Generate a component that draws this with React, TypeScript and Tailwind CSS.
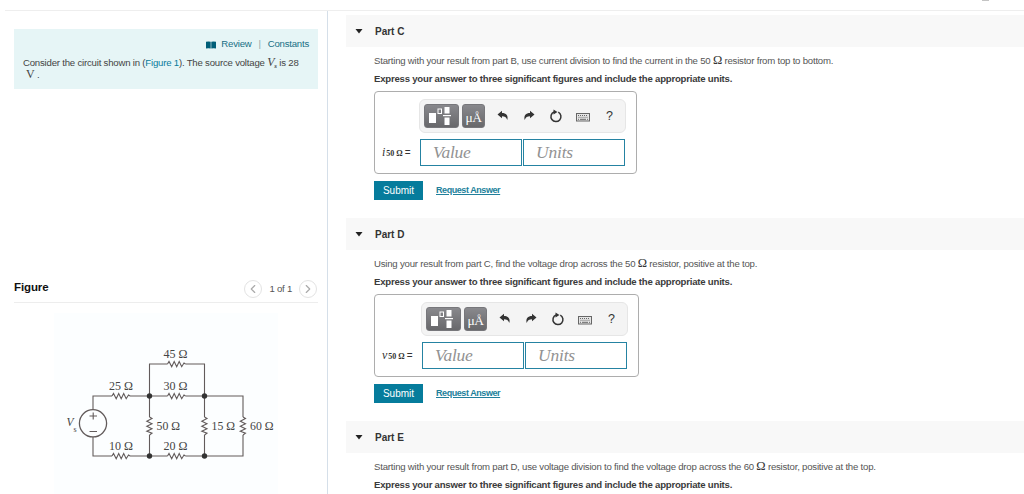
import type { ReactNode } from "react";
import { ChevronLeft, ChevronRight } from "lucide-react";

interface AnswerBoxProps {
  variable: string;
  wide?: boolean;
}

interface PartProps {
  name: string;
  children: ReactNode;
  answer?: ReactNode;
}

const resistorsAcross = [
  { x: 112, y: 396, label: "25 Ω", lx: 109 },
  { x: 167.5, y: 364, label: "45 Ω", lx: 163.5 },
  { x: 167.5, y: 396, label: "30 Ω", lx: 163.5 },
  { x: 112, y: 456, label: "10 Ω", lx: 109 },
  { x: 167.5, y: 456, label: "20 Ω", lx: 163.5 },
];

const resistorsDown = [
  { x: 149.5, label: "50 Ω", lx: 156.5 },
  { x: 204.5, label: "15 Ω", lx: 211.5 },
  { x: 243, label: "60 Ω", lx: 250 },
];

const nodes = [
  [149.5, 396],
  [204.5, 396],
  [149.5, 456],
  [204.5, 456],
];

function Circuit() {
  return (
    <svg viewBox="54 313 224 181" className="ml-10 mt-2.5 h-[181px] w-56 shrink-0 bg-[#fcfeff]">
      <g fill="none" stroke="#625b5b" strokeWidth="1.1">
        <path d="M93 409.500V396H112M130 396H167.500M185.500 396H243V417M243 435V456H185.500M167.500 456H130M112 456H93V437" />
        <path d="M149.500 396V364H167.500M185.500 364H204.500V417M204.500 435V456M149.500 396V417M149.500 435V456" />
        <circle cx="93" cy="423.300" r="13.600" strokeWidth="1.300" />
        <path d="M89.500 416H97M93.200 412.500V419.500M89.500 431.500H97" />
        {resistorsAcross.map((r) => (
          <path
            key={r.label}
            transform={`translate(${r.x} ${r.y})`}
            d="M0 0L1.500 -2.500L4.200 2.700L6.700 -2.500L9.200 2.700L11.700 -2.500L14.200 2.700L16.500 -1L18 0"
          />
        ))}
        {resistorsDown.map((r) => (
          <path
            key={r.label}
            transform={`translate(${r.x} 417)`}
            d="M0 0L2.500 1.500L-2.700 4.200L2.500 6.700L-2.700 9.200L2.500 11.700L-2.700 14.200L2.500 16.200L0 18"
          />
        ))}
      </g>
      {nodes.map(([x, y]) => (
        <circle key={`${x}-${y}`} cx={x} cy={y} r="2.700" fill="#333" />
      ))}
      <g fill="#444" fontFamily="Liberation Serif, serif" fontSize="11.500">
        {resistorsAcross.map((r) => (
          <text key={r.label} x={r.lx} y={r.y - 6} textLength="24" lengthAdjust="spacingAndGlyphs">{r.label}</text>
        ))}
        {resistorsDown.map((r) => (
          <text key={r.label} x={r.lx} y="430" textLength="23.500" lengthAdjust="spacingAndGlyphs">{r.label}</text>
        ))}
        <text x="66.500" y="426" fontStyle="italic">V</text>
        <text x="73.500" y="431.500" fontSize="8">s</text>
      </g>
    </svg>
  );
}

function Omega() {
  return <span className="font-['Liberation_Serif',serif] text-[12.500px] leading-none text-[#333]">Ω</span>;
}

function Toolbar() {
  return (
    <div className="flex h-[34px] w-[207px] items-center rounded-md border border-[#e6e6e6] bg-[#f4f4f4] pl-1">
      <button className="h-6 w-[35px] rounded-[3px] border border-[#77777b] bg-linear-to-b from-[#89898d] to-[#68686b]" aria-label="Templates">
        <svg viewBox="0 0 33 22" className="h-[22px] w-[33px]" fill="white">
          <rect x="4" y="8" width="7" height="10" />
          <rect x="13" y="4" width="3.500" height="4.500" fill="none" stroke="white" />
          <rect x="19.500" y="2" width="5" height="6.500" />
          <rect x="18" y="10" width="8" height="1.200" />
          <rect x="19.500" y="12.500" width="5" height="7.500" />
        </svg>
      </button>
      <button className="ml-[3px] h-6 w-[23px] rounded-[3px] border border-[#77777b] bg-linear-to-b from-[#89898d] to-[#68686b] pt-[3px] font-['Liberation_Serif',serif] text-[13.500px] leading-4 tracking-[-0.4px] text-white">
        μÅ
      </button>
      <svg viewBox="0 0 12 12" className="ml-3 size-3" fill="#333">
        <path d="M0.500 4.500L5 0.800V3C9 3 11.500 5.500 10.300 10C9.300 7 7.800 6.200 5 6.200V8.300Z" />
      </svg>
      <svg viewBox="0 0 12 12" className="ml-3.5 size-3" fill="#333">
        <path d="M11.500 4.500L7 0.800V3C3 3 0.500 5.500 1.700 10C2.700 7 4.200 6.200 7 6.200V8.300Z" />
      </svg>
      <svg viewBox="0 0 14 14" className="ml-3.5 mb-px size-3.5" fill="none" stroke="#333" strokeWidth="1.500">
        <path d="M9.300 3.200A5 5 0 1 1 5 3" />
        <path d="M4.500 0.500V5.500L8.500 3Z" fill="#333" stroke="none" />
      </svg>
      <svg viewBox="0 0 14 9" className="ml-[13px] mt-0.5 h-[9px] w-3.5" fill="none" stroke="#666">
        <rect x="0.500" y="0.500" width="13" height="7.500" fill="#e5e5e5" />
        <path d="M2 2.500H12M2.500 4.300H12" strokeDasharray="1 1" />
        <path d="M2 6.300H3M4 6.300H10M11 6.300H12" />
      </svg>
      <span className="ml-4 text-[12.500px] leading-4 text-[#333]">?</span>
    </div>
  );
}

function AnswerBox({ variable, wide }: AnswerBoxProps) {
  return (
    <div className={`mt-1 h-[83px] rounded border border-[#adadad] pt-[7px] ${wide ? "w-[265px]" : "w-[263px]"}`}>
      <div className={wide ? "ml-[46px]" : "ml-11"}>
        <Toolbar />
      </div>
      <div className="mt-1.5 flex h-[27px] items-center">
        <div className={`flex items-baseline whitespace-nowrap pl-[7px] font-['Liberation_Serif',serif] text-[#333] ${wide ? "w-[47px]" : "w-[45px]"}`}>
          <span className="text-[12px] italic leading-none">{variable}</span>
          <span className="ml-px text-[8px] font-bold text-[#333]">50 Ω</span>
          <span className="ml-0.5 font-['Liberation_Sans',sans-serif] text-[10px]">=</span>
        </div>
        <input
          className="h-[27px] w-[102px] border border-[#2583a2] bg-white pl-[12px] font-['Liberation_Serif',serif] text-[17.500px] italic tracking-[-0.3px] placeholder:text-[#929292]"
          placeholder="Value"
        />
        <input
          className="ml-px h-[27px] w-[102px] border border-[#2583a2] bg-white pl-[12px] font-['Liberation_Serif',serif] text-[17.500px] italic tracking-[-0.2px] placeholder:text-[#929292]"
          placeholder="Units"
        />
      </div>
    </div>
  );
}

function Part({ name, children, answer }: PartProps) {
  return (
    <section className="h-[203px] shrink-0">
      <header className="flex h-8 items-center bg-[#f8f8f8] pl-[9px]">
        <svg viewBox="0 0 8 5" className="h-[5px] w-2" fill="#222">
          <path d="M0.500 0H7.500L4 4.500Z" />
        </svg>
        <h2 className="ml-3 text-[10px] font-bold text-[#333]">{name}</h2>
      </header>
      <div className="pl-7">
        <p className="mt-1.5 h-4 whitespace-nowrap text-[9.600px] leading-4 tracking-[-0.21px] text-[#555]">{children}</p>
        <p className="mt-0.5 h-4 whitespace-nowrap text-[9.600px] font-bold leading-4 tracking-[-0.22px] text-[#3b3b3b]">
          Express your answer to three significant figures and include the appropriate units.
        </p>
        {answer}
        {answer && (
          <div className="mt-[7px] flex items-center">
            <button className="h-[19px] w-[49px] bg-[#067c9c] text-[10px] text-white">Submit</button>
            <a className="mb-0.5 ml-[13px] text-[9px] font-bold leading-3 tracking-[-0.43px] text-[#217f9b] underline">Request Answer</a>
          </div>
        )}
      </div>
    </section>
  );
}

export default function App() {
  return (
    <div className="flex h-[494px] w-[1024px] flex-col overflow-hidden bg-white font-['Liberation_Sans',Arial,sans-serif]">
      <div className="flex h-2.5 shrink-0 justify-end pr-[35px]">
        <div className="h-px w-[7px] bg-[#c4c4c4]" />
      </div>
      <div className="ml-[5px] flex min-h-0 flex-1 border-t border-[#eeeeee]">
        <aside className="flex w-[323px] shrink-0 flex-col border-r border-[#d5dfe9] pl-[9px]">
          <div className="mt-[18px] h-[60px] w-[304px] shrink-0 bg-[#e6f5f6] pl-[9px] pt-[9px]">
            <div className="flex h-[13px] items-center justify-end pr-[9px] text-[9.600px] tracking-[-0.22px] text-[#176f85]">
              <svg viewBox="0 0 10 8" className="mr-[5px] h-2 w-2.5" fill="#005e78">
                <path d="M0 0.800Q2.500 0 4.700 0.800V7.500Q2.500 6.800 0 7.500ZM5.300 0.800Q7.500 0 10 0.800V7.500Q7.500 6.800 5.300 7.500Z" />
              </svg>
              <span>Review</span>
              <span className="mx-[7px] text-[#8da5ac]">|</span>
              <span>Constants</span>
            </div>
            <p className="mt-[5px] whitespace-nowrap text-[9.600px] leading-[11px] tracking-[-0.2px] text-[#444]">
              Consider the circuit shown in (<span className="text-[#087c9d]">Figure 1</span>). The source voltage{" "}
              <span className="font-['Liberation_Serif',serif] text-[12px] italic leading-none">V</span>
              <span className="relative top-0.5 font-['Liberation_Serif',serif] text-[7px] font-bold italic leading-none">s</span> is 28
              <br />
              <span className="ml-[3px] font-['Liberation_Serif',serif] text-[12px] leading-none">V</span> .
            </p>
          </div>
          <div className="mt-[188px] flex h-[26px] w-[304px] shrink-0 items-center justify-between border-b border-[#ededed]">
            <h2 className="mb-1 text-[11.500px] font-bold tracking-[-0.1px] text-[#111]">Figure</h2>
            <div className="mb-0.5 flex items-center pr-px text-[#555]">
              <button className="flex size-[18px] items-center justify-center rounded-full border border-[#e3e3e3]" aria-label="Previous figure">
                <ChevronLeft className="size-3.5 text-[#aaa]" />
              </button>
              <span className="ml-[7px] mr-[7px] mt-0.5 text-[9.600px] tracking-[-0.25px]">1 of 1</span>
              <button className="flex size-[18px] items-center justify-center rounded-full border border-[#e3e3e3]" aria-label="Next figure">
                <ChevronRight className="size-3.5 text-[#aaa]" />
              </button>
            </div>
          </div>
          <Circuit />
        </aside>
        <main className="ml-[18px] flex flex-1 flex-col pt-1">
          <Part name="Part C" answer={<AnswerBox variable="i" />}>
            Starting with your result from part B, use current division to find the current in the 50 <Omega /> resistor from top to bottom.
          </Part>
          <Part name="Part D" answer={<AnswerBox variable="v" wide />}>
            Using your result from part C, find the voltage drop across the 50 <Omega /> resistor, positive at the top.
          </Part>
          <Part name="Part E">
            Starting with your result from part D, use voltage division to find the voltage drop across the 60 <Omega /> resistor, positive at the top.
          </Part>
        </main>
      </div>
    </div>
  );
}
